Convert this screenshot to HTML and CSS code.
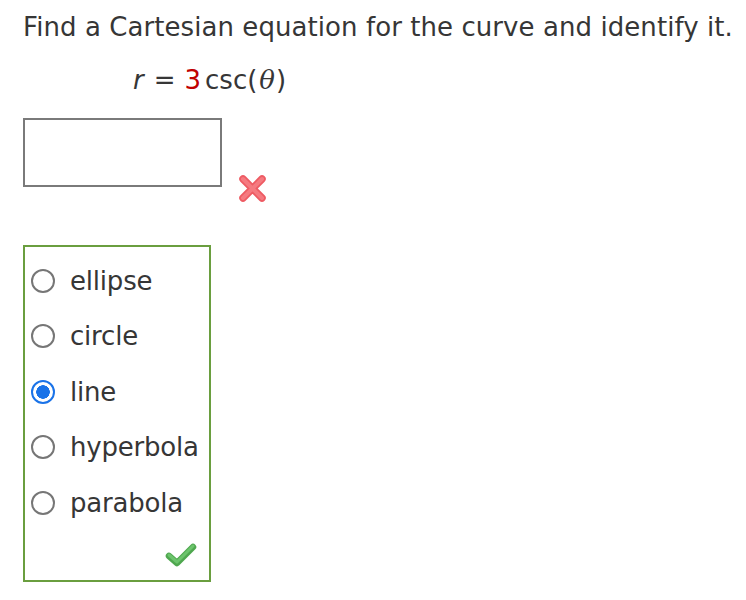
FILE: index.html
```html
<!DOCTYPE html>
<html>
<head>
<meta charset="utf-8">
<link rel="stylesheet" href="styles.css">
</head>
<body>
<div class="page">
  <p class="question">Find a Cartesian equation for the curve and identify it.</p>
  <div class="equation"><span class="var">r</span><span class="eq">=</span><span class="num">3</span><span class="fn">csc(</span><span class="var theta">θ</span><span class="fn">)</span></div>
  <div class="answer-row">
    <div class="answer-box"></div>
    <svg class="cross" width="31" height="31" viewBox="0 0 31 31">
      <path d="M6 6 L25 25 M25 6 L6 25" stroke="#ee5b63" stroke-width="7.5" stroke-linecap="round"/>
      <path d="M6 6 L25 25 M25 6 L6 25" stroke="#f57a80" stroke-width="4" stroke-linecap="round"/>
    </svg>
  </div>
  <div class="choices">
    <label class="choice"><span class="radio"></span><span class="label">ellipse</span></label>
    <label class="choice"><span class="radio"></span><span class="label">circle</span></label>
    <label class="choice"><span class="radio checked"></span><span class="label">line</span></label>
    <label class="choice"><span class="radio"></span><span class="label">hyperbola</span></label>
    <label class="choice"><span class="radio"></span><span class="label">parabola</span></label>
    <div class="check-row">
      <svg class="check" width="32" height="26" viewBox="0 0 32 26">
        <path d="M4 14 L12 21 L28 5" fill="none" stroke="#4fa74f" stroke-width="6.5" stroke-linecap="round" stroke-linejoin="round"/>
        <path d="M4 13 L12 20 L28 4" fill="none" stroke="#6cc46c" stroke-width="3" stroke-linecap="round" stroke-linejoin="round"/>
      </svg>
    </div>
  </div>
</div>
</body>
</html>
```
FILE: styles.css
```css
html, body {
  margin: 0;
  padding: 0;
  background: #ffffff;
}
body {
  font-family: "DejaVu Sans", Verdana, sans-serif;
  color: #363636;
}
.page {
  padding: 11px 0 0 23px;
}
.question {
  margin: 0;
  font-size: 26px;
  line-height: 32px;
  letter-spacing: 0.07px;
}
.equation {
  margin: 21px 0 0 110px;
  font-size: 26px;
  line-height: 32px;
}
.equation .var {
  font-style: italic;
}
.equation .theta {
  font-family: "DejaVu Serif", serif;
  margin: 0 1px 0 2px;
}
.equation .num {
  color: #c00000;
  margin-left: 9px;
  margin-right: 4px;
}
.equation .eq {
  margin-left: 10px;
}
.answer-row {
  display: flex;
  align-items: flex-end;
  margin-top: 22px;
}
.answer-box {
  width: 195px;
  height: 65px;
  border: 2px solid #7a7a7a;
}
.cross {
  margin-left: 15px;
  margin-bottom: -17px;
}
.choices {
  margin-top: 58px;
  width: 184px;
  height: 327px;
  border: 2px solid #6a9e3f;
  display: flex;
  flex-direction: column;
  padding-top: 6px;
  box-sizing: content-box;
}
.choice {
  display: flex;
  align-items: center;
  height: 55.5px;
  padding-left: 6px;
  font-size: 26px;
}
.label {
  letter-spacing: -0.2px;
}
.radio {
  width: 24px;
  height: 24px;
  border: 2px solid #767676;
  border-radius: 50%;
  box-sizing: border-box;
  margin-right: 15px;
  flex: none;
}
.radio.checked {
  border: 2px solid #1a73e8;
  background: radial-gradient(circle, #1a73e8 0 6.5px, #ffffff 7px);
}
.check-row {
  display: flex;
  justify-content: flex-end;
  padding-right: 12px;
  margin-top: 11px;
}
```
